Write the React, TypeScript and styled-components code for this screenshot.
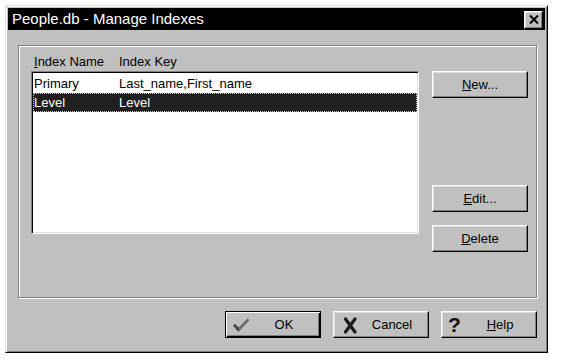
import styled, { createGlobalStyle } from "styled-components";

const GlobalStyle = createGlobalStyle`
  * {
    box-sizing: border-box;
  }
  body {
    margin: 0;
    background: #fff;
    font-family: "Liberation Sans", Arial, sans-serif;
  }
`;

const Window = styled.div`
  margin: 5px 0 0 5px;
  width: 543px;
  height: 348px;
  display: flex;
  flex-direction: column;
  background: #c0c0c0;
  border: 1px solid;
  border-color: #dfdfdf #000 #000 #dfdfdf;
  box-shadow: inset 1px 1px #fff, inset -1px -1px #808080;
  padding: 2px;
`;

const TitleBar = styled.div`
  height: 22px;
  flex: none;
  background: #000;
  display: flex;
  align-items: center;
  justify-content: space-between;
  padding: 0 2px 0 4px;
`;

const Title = styled.span`
  color: #fff;
  font-size: 15px;
  line-height: 22px;
  padding-bottom: 1px;
`;

const CloseButton = styled.div`
  width: 19px;
  height: 18px;
  background: #c0c0c0;
  border: 1px solid;
  border-color: #fff #000 #000 #fff;
  box-shadow: inset -1px -1px #808080, inset 1px 1px #dfdfdf;
  display: flex;
  align-items: center;
  justify-content: center;
  margin-top: 1px;
`;

const Body = styled.div`
  flex: 1;
  display: flex;
  flex-direction: column;
  padding: 15px 8px 12px 10px;
`;

const GroupBox = styled.div`
  height: 253px;
  border: 1px solid #808080;
  box-shadow: 1px 1px 0 #fff, inset 1px 1px 0 #fff;
  display: grid;
  grid-template-columns: 388px 96px;
  column-gap: 13px;
  align-items: start;
  padding: 6px 8px 0 12px;
`;

const ListColumn = styled.div`
  display: flex;
  flex-direction: column;
`;

const Columns = styled.div`
  display: grid;
  grid-template-columns: 85px 1fr;
`;

const HeaderRow = styled(Columns)`
  height: 19px;
  align-items: center;
  padding-left: 3px;
  font-size: 13px;
  color: #000;
`;

const ListBox = styled.div`
  height: 163px;
  background: #fff;
  border: 1px solid;
  border-color: #808080 #fff #fff #808080;
  box-shadow: inset 1px 1px #000, inset -1px -1px #dfdfdf;
  padding: 2px 1px 1px;
`;

const Row = styled(Columns)<{ $selected?: boolean }>`
  height: 19px;
  align-items: center;
  font-size: 13px;
  border: 1px ${(p) => (p.$selected ? "dotted #c8c8c8" : "solid transparent")};
  background: ${(p) => (p.$selected ? "#202020" : "transparent")};
  color: ${(p) => (p.$selected ? "#fff" : "#000")};
`;

const SideButtons = styled.div`
  display: flex;
  flex-direction: column;
  padding-top: 19px;
`;

const Button = styled.div<{ $default?: boolean; $space?: number }>`
  width: 96px;
  height: 27px;
  margin-top: ${(p) => p.$space ?? 0}px;
  background: #c0c0c0;
  border: 1px solid;
  border-color: ${(p) => (p.$default ? "#000" : "#fff #000 #000 #fff")};
  box-shadow: ${(p) =>
    p.$default
      ? "inset 1px 1px #fff, inset -1px -1px #000, inset -2px -2px #808080"
      : "inset -1px -1px #808080, inset 1px 1px #dfdfdf"};
  display: flex;
  align-items: center;
  justify-content: center;
  font-size: 13px;
  color: #000;
`;

const Footer = styled.div`
  margin-top: 13px;
  display: flex;
  justify-content: flex-end;
  gap: 12px;
`;

const FooterButton = styled(Button)`
  justify-content: flex-start;
  padding: 0 6px;
`;

const IconSlot = styled.span`
  width: 22px;
  height: 18px;
  flex: none;
  display: flex;
  align-items: center;
`;

const Question = styled.span`
  font-size: 21px;
  font-weight: bold;
  line-height: 18px;
  color: #111;
`;

const Label = styled.span`
  flex: 1;
  text-align: center;
`;

function CheckIcon() {
  return (
    <svg width="22" height="18" viewBox="0 0 22 18">
      <polygon
        points="1,9.5 3,8 6.5,11.5 15.5,2.5 17.5,4 6.5,16"
        fill="#6a6a6a"
      />
      <polygon points="3,8 6.5,11.5 6.5,16 1,9.5" fill="#4a4a4a" />
    </svg>
  );
}

function CrossIcon() {
  return (
    <svg width="22" height="18" viewBox="0 0 22 18">
      <path
        d="M5.5 3 L15 16 M15 3 L5.5 16"
        stroke="#1a1a1a"
        strokeWidth="3.2"
        strokeLinecap="round"
      />
    </svg>
  );
}

function CloseGlyph() {
  return (
    <svg width="10" height="9" viewBox="0 0 10 9">
      <path d="M1 0.5 L9 8.5 M9 0.5 L1 8.5" stroke="#000" strokeWidth="2" />
    </svg>
  );
}

const indexes = [
  { name: "Primary", key: "Last_name,First_name" },
  { name: "Level", key: "Level" },
];

export default function App() {
  const selected = 1;

  return (
    <>
      <GlobalStyle />
      <Window>
        <TitleBar>
          <Title>People.db - Manage Indexes</Title>
          <CloseButton>
            <CloseGlyph />
          </CloseButton>
        </TitleBar>
        <Body>
          <GroupBox>
            <ListColumn>
              <HeaderRow>
                <span>
                  <u>I</u>ndex Name
                </span>
                <span>Index Key</span>
              </HeaderRow>
              <ListBox>
                {indexes.map((idx, i) => (
                  <Row key={idx.name} $selected={i === selected}>
                    <span>{idx.name}</span>
                    <span>{idx.key}</span>
                  </Row>
                ))}
              </ListBox>
            </ListColumn>
            <SideButtons>
              <Button>
                <span>
                  <u>N</u>ew...
                </span>
              </Button>
              <Button $space={87}>
                <span>
                  <u>E</u>dit...
                </span>
              </Button>
              <Button $space={13}>
                <span>
                  <u>D</u>elete
                </span>
              </Button>
            </SideButtons>
          </GroupBox>
          <Footer>
            <FooterButton $default>
              <IconSlot>
                <CheckIcon />
              </IconSlot>
              <Label>OK</Label>
            </FooterButton>
            <FooterButton>
              <IconSlot>
                <CrossIcon />
              </IconSlot>
              <Label>Cancel</Label>
            </FooterButton>
            <FooterButton>
              <IconSlot>
                <Question>?</Question>
              </IconSlot>
              <Label>
                <u>H</u>elp
              </Label>
            </FooterButton>
          </Footer>
        </Body>
      </Window>
    </>
  );
}
